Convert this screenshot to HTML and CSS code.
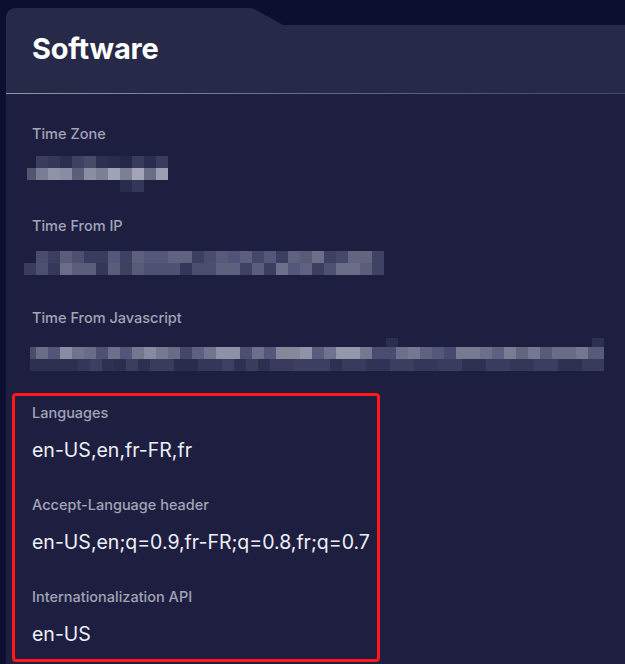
FILE: index.html
```html
<!DOCTYPE html>
<html lang="en">
<head>
<meta charset="utf-8">
<title>Software</title>
<link rel="stylesheet" href="styles.css">
</head>
<body>
<div class="card">
  <div class="tab"></div>
  <header class="head"><h1 class="title">Software</h1></header>
  <div class="content">
    <div class="field">
      <div class="label">Time Zone</div>
      <div class="blur blur-tz">
        <div class="row tz1"></div>
        <div class="row tz2"></div>
        <div class="row tz3"></div>
      </div>
    </div>
    <div class="field">
      <div class="label">Time From IP</div>
      <div class="blur blur-ip">
        <div class="row ip1"></div>
        <div class="row ip2"></div>
      </div>
    </div>
    <div class="field">
      <div class="label">Time From Javascript</div>
      <div class="blur blur-js">
        <div class="row js0"></div>
        <div class="row js1"></div>
        <div class="row js2"></div>
      </div>
    </div>
    <div class="highlight">
      <div class="field">
        <div class="label">Languages</div>
        <div class="value">en-US,en,fr-FR,fr</div>
      </div>
      <div class="field">
        <div class="label">Accept-Language header</div>
        <div class="value">en-US,en;q=0.9,fr-FR;q=0.8,fr;q=0.7</div>
      </div>
      <div class="field">
        <div class="label">Internationalization API</div>
        <div class="value">en-US</div>
      </div>
    </div>
  </div>
</div>
</body>
</html>
```

FILE: styles.css
```css
* { box-sizing: border-box; }
html, body { margin: 0; padding: 0; }
body {
  background: #0c0f2e;
  font-family: "Inter", "Liberation Sans", sans-serif;
  padding: 8px 0 0 6px;
  width: 625px;
  height: 664px;
  overflow: hidden;
}
.card {
  width: 640px;
  display: flex;
  flex-direction: column;
}
.tab {
  width: 277px;
  height: 17px;
  background: #262a48;
  border-top-left-radius: 9px;
  clip-path: polygon(0 0, 244px 0, 247px 0.5px, 250px 2px, 100% 100%, 0 100%);
}
.head {
  background: #262a48;
  height: 69px;
  padding: 6px 0 0 26px;
  border-bottom: 1px solid #8b8ca3;
  border-image: linear-gradient(90deg, #9596ab 0%, #6e7090 40%, #3f4262 100%) 1;
}
.title {
  margin: 0;
  font-size: 29px;
  line-height: 36px;
  font-weight: 700;
  color: #ffffff;
  letter-spacing: -0.2px;
}
.content {
  background: #1e1f40;
  padding: 30px 0 20px 26px;
  display: flex;
  flex-direction: column;
  gap: 31px;
}
.field {
  display: flex;
  flex-direction: column;
}
.label {
  font-size: 14.5px;
  line-height: 20px;
  font-weight: 500;
  color: #a2a4b7;
  margin-bottom: 13px;
  white-space: nowrap;
}
.value {
  font-size: 19.5px;
  line-height: 28px;
  font-weight: 400;
  color: #eff0f7;
  white-space: nowrap;
}
.blur {
  height: 28px;
  display: flex;
  flex-direction: column;
}
.row { height: 12px; flex-shrink: 0; }

.blur-tz { margin-left: -5px; }
.tz1 {
  margin-top: -1px;
  width: 141px;
  background: linear-gradient(90deg, transparent 0 9px, #3b3d5e 9px 21px, #35375a 21px 33px, #2c2e50 33px 45px, #3f4163 45px 57px, #484a6a 57px 69px, #2e3052 69px 81px, #2a2c4e 81px 93px, #25274a 93px 105px, #393b5c 105px 117px, #2b2d4f 117px 129px, #3a3c5d 129px 141px);
}
.tz2 {
  width: 141px;
  background: linear-gradient(90deg, #53556f 0 9px, #7b7d95 9px 21px, #9092a7 21px 33px, #8a8ca1 33px 45px, #5d5f7a 45px 57px, #8b8da3 57px 69px, #7e8097 69px 81px, #a0a2b5 81px 93px, #7d7f96 93px 105px, #a3a5b7 105px 117px, #6b6d86 117px 129px, #9b9db0 129px 141px);
}
.tz3 {
  width: 141px;
  background: linear-gradient(90deg, transparent 0 93px, #2a2c4d 93px 105px, #35375a 105px 117px, transparent 117px);
}

.blur-ip { margin-left: -8px; }
.ip1 {
  margin-top: 2px;
  width: 360px;
  background: linear-gradient(90deg, transparent 0 12px, #4a4c6c 12px 24px, #3c3e60 24px 36px, #5a5c7a 36px 48px, #4d4f6f 48px 60px, #3a3c5e 60px 84px, #55577a 84px 96px, #3f4163 96px 108px, #5d5f7c 108px 120px, #55577a 120px 144px, #60627f 144px 168px, #3d3f61 168px 180px, #4a4c6c 180px 192px, #585a78 192px 204px, #50527a 204px 216px, #5c5e7c 216px 228px, #454768 228px 240px, #55577a 240px 252px, #3c3e60 252px 264px, #5f617f 264px 276px, #585a78 276px 288px, #6c6e8a 288px 300px, #3e4062 300px 312px, #464869 312px 324px, #63657f 324px 348px, #404263 348px 360px);
}
.ip2 {
  width: 360px;
  background: linear-gradient(90deg, #3a3c5d 0 12px, #4d4f6e 12px 24px, #363859 24px 36px, #6a6c88 36px 48px, #5b5d7a 48px 72px, #34365a 72px 84px, #5a5c79 84px 96px, #3e4062 96px 108px, #585a78 108px 120px, #4f5172 120px 156px, #34365a 156px 168px, #4c4e6f 168px 192px, #5e6080 192px 216px, #404265 216px 228px, #5c5e7c 228px 240px, #3c3e60 240px 252px, #6d6f8b 252px 264px, #55577a 264px 276px, #5f617e 276px 288px, #3c3e61 288px 300px, #4f5172 300px 312px, #6a6c88 312px 336px, #5b5d7b 336px 348px, #404265 348px 360px);
}

.blur-js { margin-left: -2px; }
.js0 {
  margin-top: -3px;
  height: 9px;
  width: 574px;
  background: linear-gradient(90deg, transparent 0 356px, #2c2e50 356px 368px, transparent 368px 562px, #2e3052 562px 574px);
}
.js1 {
  width: 574px;
  background: linear-gradient(90deg, #4a4c6b 0 6px, #6b6d88 6px 18px, #53557a 18px 30px, #8a8ca2 30px 42px, #71738d 42px 54px, #6a6c87 54px 66px, #4f5173 66px 78px, #6e708b 78px 90px, #53557a 90px 102px, #75778f 102px 114px, #878aa0 114px 126px, #777990 126px 138px, #6a6c87 138px 150px, #44466a 150px 162px, #5e6080 162px 174px, #727490 174px 186px, #8f91a6 186px 210px, #4d4f72 210px 222px, #6e708b 222px 234px, #55577a 234px 246px, #868899 246px 270px, #9093a7 270px 282px, #5a5c7c 282px 294px, #707290 294px 306px, #9496aa 306px 330px, #777990 330px 342px, #4b4d70 342px 366px, #6e708b 366px 378px, #767891 378px 390px, #5f6181 390px 402px, #55577a 402px 414px, #474a6d 414px 426px, #787a92 426px 450px, #6c6e8a 450px 462px, #5e6081 462px 474px, #7a7c93 474px 486px, #63657f 486px 498px, #757790 498px 510px, #585a7a 510px 522px, #6a6c87 522px 546px, #757790 546px 558px, #585a78 558px 574px);
}
.js2 {
  width: 574px;
  background: linear-gradient(90deg, #2e3052 0 48px, #35375a 48px 60px, #3d3f61 60px 72px, #2f3153 72px 84px, #2c2e50 84px 96px, #3c3e60 96px 108px, #2e3052 108px 120px, #3a3c5e 120px 144px, #2a2c4e 144px 168px, #35375a 168px 192px, #3e4063 192px 204px, #2f3153 204px 216px, #3b3d5f 216px 228px, #2d2f51 228px 240px, #393b5d 240px 264px, #3d3f62 264px 300px, #2f3153 300px 312px, #393b5d 312px 336px, #313356 336px 360px, #3c3e60 360px 384px, #35375a 384px 408px, #3a3c5e 408px 432px, #2f3153 432px 456px, #3b3d5f 456px 480px, #34365a 480px 504px, #3c3e61 504px 528px, #2f3153 528px 552px, #393b5d 552px 574px);
}

.highlight {
  margin-left: -20px;
  margin-top: -7px;
  width: 368px;
  border: 3px solid #ff1a1a;
  border-radius: 4px;
  padding: 7px 0 11px 17px;
  display: flex;
  flex-direction: column;
  gap: 31px;
}
```
